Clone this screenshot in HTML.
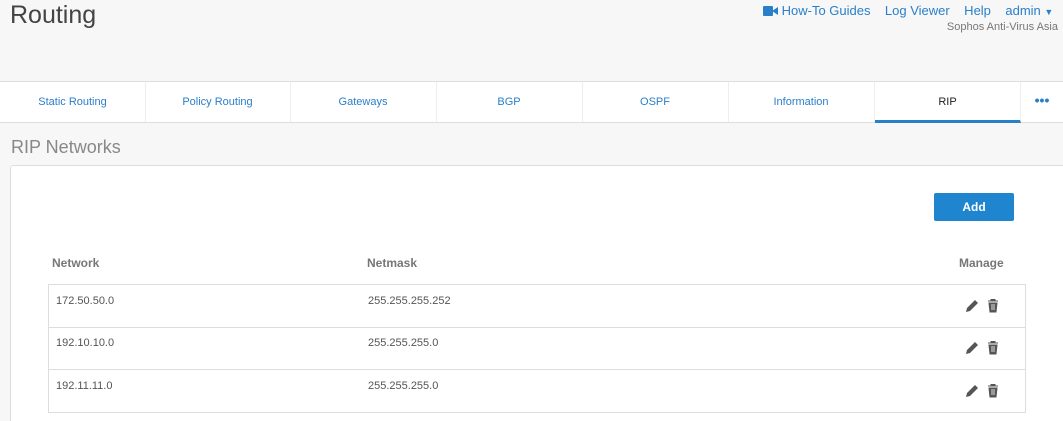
<html><head><style>
html,body{margin:0;width:1063px;height:421px;overflow:hidden}
body{background:#f7f7f7;font-family:"Liberation Sans",sans-serif;position:relative}
.a{position:absolute}
.tabs{left:0;top:81px;width:1063px;height:40px;background:#fff;border-top:1px solid #ddd;border-bottom:1px solid #ddd}
.tab{position:absolute;top:0;height:40px;line-height:40px;text-align:center;font-size:11px;color:#2a7fc9;border-right:1px solid #eee}
.row{position:absolute;left:48px;width:976px;height:42px;border:1px solid #ddd;border-top:none;font-size:11px;color:#555}
.row span{position:absolute;top:10px}
</style></head><body>
<div class="a" style="left:10px;top:1px;font-size:25px;color:#444">Routing</div>
<div class="a" style="left:763px;top:3px;font-size:13px;color:#2a7fc9;white-space:nowrap">
<svg width="15" height="10" style="vertical-align:-1px"><rect x="0" y="0" width="10" height="10" rx="1" fill="#2a7fc9"/><path d="M9 5L15 1V9Z" fill="#2a7fc9"/></svg> How-To Guides&nbsp;&nbsp;&nbsp;&nbsp;Log Viewer&nbsp;&nbsp;&nbsp;&nbsp;Help&nbsp;&nbsp;&nbsp;&nbsp;admin <span style="font-size:9px">▼</span></div>
<div class="a" style="right:5px;top:21px;font-size:11px;color:#777">Sophos Anti-Virus Asia</div>
<div class="a tabs">
<div class="tab" style="left:0;width:145px">Static Routing</div>
<div class="tab" style="left:145px;width:145px">Policy Routing</div>
<div class="tab" style="left:290px;width:146px">Gateways</div>
<div class="tab" style="left:436px;width:146px">BGP</div>
<div class="tab" style="left:582px;width:146px">OSPF</div>
<div class="tab" style="left:728px;width:146px">Information</div>
<div class="tab" style="left:875px;width:145px;color:#222;height:38px;border-bottom:3px solid #2a7fc9;line-height:40px">RIP</div>
<div class="tab" style="left:1021px;width:42px;font-size:14px;font-weight:bold;border:none;line-height:36px">•••</div>
</div>
<div class="a" style="left:11px;top:137px;font-size:18px;color:#888">RIP Networks</div>
<div class="a" style="left:10px;top:165px;width:1060px;height:256px;background:#fff;border:1px solid #ddd;border-bottom:none;border-radius:3px 3px 0 0"></div>
<div class="a" style="left:934px;top:193px;width:80px;height:28px;background:#1f85cf;border-radius:2px;color:#fff;font-size:12px;font-weight:bold;text-align:center;line-height:28px">Add</div>
<div class="a" style="left:52px;top:256px;font-size:12px;font-weight:bold;color:#777">Network</div>
<div class="a" style="left:367px;top:256px;font-size:12px;font-weight:bold;color:#777">Netmask</div>
<div class="a" style="left:959px;top:256px;font-size:12px;font-weight:bold;color:#777">Manage</div>
<div class="row" style="top:284px;border-top:1px solid #ddd"><span style="left:7px">172.50.50.0</span><span style="left:319px">255.255.255.252</span><span style="left:915px;top:13px"><svg width="36" height="16"><path d="M2 14L3 10L11 2L14 5L6 13Z" fill="#555"/><path d="M24 3H34M27 3V1.5H31V3M25 5H33L32 14H26Z" fill="#555" stroke="#555" stroke-width="1"/><path d="M28 6V12M30 6V12" stroke="#fff" stroke-width="0.8"/></svg></span></div>
<div class="row" style="top:327px"><span style="left:7px">192.10.10.0</span><span style="left:319px">255.255.255.0</span><span style="left:915px;top:13px"><svg width="36" height="16"><path d="M2 14L3 10L11 2L14 5L6 13Z" fill="#555"/><path d="M24 3H34M27 3V1.5H31V3M25 5H33L32 14H26Z" fill="#555" stroke="#555" stroke-width="1"/><path d="M28 6V12M30 6V12" stroke="#fff" stroke-width="0.8"/></svg></span></div>
<div class="row" style="top:370px"><span style="left:7px">192.11.11.0</span><span style="left:319px">255.255.255.0</span><span style="left:915px;top:13px"><svg width="36" height="16"><path d="M2 14L3 10L11 2L14 5L6 13Z" fill="#555"/><path d="M24 3H34M27 3V1.5H31V3M25 5H33L32 14H26Z" fill="#555" stroke="#555" stroke-width="1"/><path d="M28 6V12M30 6V12" stroke="#fff" stroke-width="0.8"/></svg></span></div>
</body></html>
